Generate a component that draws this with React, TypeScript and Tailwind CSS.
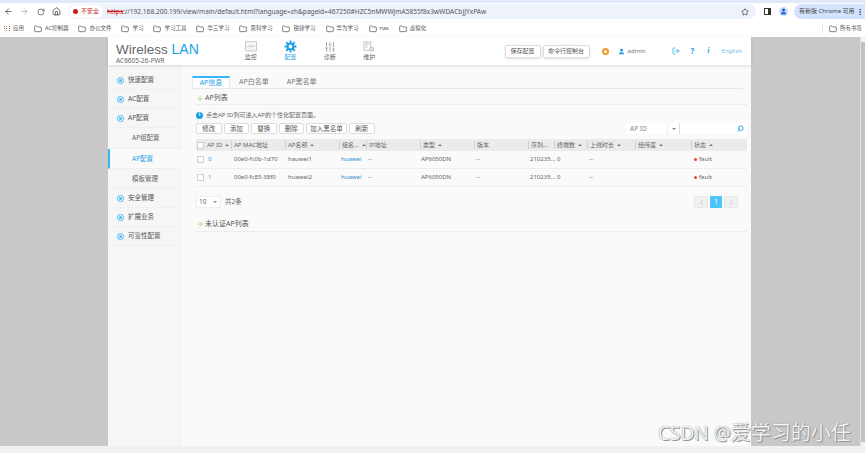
import { ArrowDown, ArrowLeft, ArrowRight, ChevronLeft, ChevronRight, Folder, House, LogOut, MoreVertical, RotateCw, Search, SlidersVertical, Star, User } from 'lucide-react';

const cjk = { fontFamily: '"Noto Sans", "Noto Sans CJK SC", sans-serif' };

const bookmarks = ['AC控制器', '办公文件', '学习', '学习工具', '华三学习', '思科学习', '锐捷学习', '华为学习', 'nas', '虚拟化'];
const sideMenu = [
  { label: '快速配置', h: 'h-[19px]' },
  { label: 'AC配置', h: 'h-[19px]' },
  { label: 'AP配置', h: 'h-[19px]' },
  { label: 'AP组配置', h: 'h-[21px]', sub: true },
  { label: 'AP配置', h: 'h-[20px]', sub: true, active: true },
  { label: '模板管理', h: 'h-[20px]', sub: true },
  { label: '安全管理', h: 'h-[19px]' },
  { label: '扩展业务', h: 'h-[19px]' },
  { label: '可靠性配置', h: 'h-[19px]' },
];
const actions = ['修改', '添加', '替换', '删除', '加入黑名单', '刷新'];
const columns = [
  { label: 'AP ID', sort: true },
  { label: 'AP MAC地址' },
  { label: 'AP名称', sort: true },
  { label: '组名...', sort: true },
  { label: 'IP地址' },
  { label: '类型', sort: true },
  { label: '版本' },
  { label: '序列...' },
  { label: '终端数', sort: true },
  { label: '上线时长', sort: true },
  { label: '经纬度', sort: true },
  { label: '状态', sort: true },
];
const rows = [
  { id: '0', mac: '00e0-fc0b-1d70', name: 'hauwei1' },
  { id: '1', mac: '00e0-fc85-38f0', name: 'huawei2' },
];
const tableCols = 'grid grid-cols-[35px_54px_54px_27px_54px_54px_54px_26px_33px_48px_56px_56px]';

function CircleMark() {
  return (
    <span className="flex w-[7px] h-[7px] items-center justify-center rounded-full border border-[#4db8f0]">
      <span className="w-[3px] h-[3px] rounded-full bg-[#4db8f0]" />
    </span>
  );
}

function GearIcon() {
  return (
    <svg width="13" height="13" viewBox="0 0 24 24" fill="none" stroke="#1a9fe8" strokeWidth="4" strokeLinejoin="round">
      <circle cx="12" cy="12" r="5.5" />
      <path strokeWidth="3.5" d="M12 1v4M12 19v4M1 12h4M19 12h4M4.2 4.2l2.9 2.9M16.9 16.9l2.9 2.9M4.2 19.8l2.9-2.9M16.9 7.1l2.9-2.9" />
    </svg>
  );
}

function MonitorIcon() {
  return (
    <svg width="12" height="11" viewBox="0 0 26 24" fill="none" stroke="#a5a5a5" strokeWidth="1.2">
      <rect x="1" y="1" width="24" height="21" rx="1" fill="#f4f4f4" />
      <path d="M5 12h5l2-3 3 4 2-2h5" />
    </svg>
  );
}

function MaintainIcon() {
  return (
    <svg width="12" height="12" viewBox="0 0 26 26" fill="none" stroke="#a5a5a5" strokeWidth="1.4">
      <rect x="2" y="2" width="15" height="18" />
      <path d="M5 6h9M5 10h5M5 14h4" />
      <circle cx="19" cy="18" r="4.5" fill="#fff" />
      <circle cx="19" cy="18" r="1.5" />
    </svg>
  );
}

function SortMark() {
  return <span className="ml-[3px] border-x-[2px] border-b-[2px] border-x-transparent border-b-[#777]" />;
}

function CheckBox() {
  return <span className="block w-[7px] h-[7px] border border-[#cfcfcf] bg-white" />;
}

function BrowserBar() {
  return (
    <div className="shrink-0 bg-white">
      <div className="h-[3px] bg-[#dfe9f8]" />
      <div className="flex items-center h-[17px] pl-[4px]">
        <ArrowLeft size={9} className="text-[#444]" />
        <ArrowRight size={9} className="ml-[7px] text-[#aaa]" />
        <RotateCw size={8} className="ml-[8px] text-[#444]" />
        <House size={9} className="ml-[7px] text-[#444]" />
        <div className="ml-[7px] flex items-center h-[15px] w-[688px] rounded-full bg-[#edf2fb]">
          <div className="flex items-center h-[13px] ml-[1px] px-[4px] gap-[3px] rounded-full bg-white">
            <span className="flex w-[5px] h-[5px] rounded-full bg-[#c5221f]" />
            <span className="text-[6px] text-[#c5221f]">不安全</span>
          </div>
          <span className="ml-[4px] text-[6.6px] text-[#555] whitespace-nowrap">
            <span className="text-[#c5221f] line-through">https</span>://192.168.200.199/view/main/default.html?language=zh&amp;pageid=467250#HZC5nMWWjmA5855f8x3wWDACbJJYxPAw
          </span>
          <Star size={8} className="ml-auto mr-[7px] text-[#333]" />
        </div>
        <span className="ml-[8px] w-[7px] h-[7px] border border-[#333] border-r-[3px]" />
        <span className="ml-[8px] flex items-center justify-center w-[9px] h-[9px] rounded-full bg-[#c9dcf8]">
          <User size={7} fill="#1a56c4" className="text-[#1a56c4]" />
        </span>
        <div className="ml-[6px] flex items-center h-[15px] flex-1 pl-[5px] rounded-l-full bg-[#d3e3fd]">
          <span className="text-[6px] text-[#444] whitespace-nowrap">有新版 Chrome 可用</span>
          <MoreVertical size={8} className="ml-auto mr-[1px] text-[#333]" />
        </div>
      </div>
      <div className="flex items-center h-[17px] pl-[4px] text-[5.5px] text-[#555]">
        <span className="grid grid-cols-3 gap-[1px] w-[6px] mr-[3px]">
          {['#ea4335', '#fbbc04', '#34a853', '#4285f4', '#ea4335', '#34a853', '#fbbc04', '#4285f4', '#ea4335'].map((c, i) => (
            <span key={i} className="w-[1px] h-[1px]" style={{ backgroundColor: c }} />
          ))}
        </span>
        <span className="mr-[10px]">应用</span>
        {bookmarks.map((b) => (
          <span key={b} className="flex items-center gap-[3px] mr-[10px]">
            <Folder size={8} className="text-[#444]" />
            {b}
          </span>
        ))}
        <div className="ml-auto flex items-center gap-[3px] pl-[6px] mr-[3px] border-l border-[#dfe9f8]">
          <Folder size={8} className="text-[#444]" />
          所有书签
        </div>
      </div>
    </div>
  );
}

function TopNav() {
  return (
    <div className="flex items-center h-[28px] shrink-0 bg-white shadow-[0_1px_3px_rgba(0,0,0,0.12)] relative">
      <div className="w-[123px] pl-[8px] pt-[4px]">
        <div className="text-[13.5px] leading-[15px] text-[#666] whitespace-nowrap" style={{ fontFamily: '"Liberation Sans", sans-serif' }}>
          Wireless <span className="text-[14px] text-[#1a9fe8]">LAN</span>
        </div>
        <div className="text-[6.5px] leading-[8px] text-[#666]">AC6605-26-PWR</div>
      </div>
      <div className="flex items-start h-full pt-[3px]">
        {[
          { label: '监控', icon: <MonitorIcon /> },
          { label: '配置', icon: <GearIcon />, active: true },
          { label: '诊断', icon: <SlidersVertical size={12} className="text-[#aaa]" /> },
          { label: '维护', icon: <MaintainIcon /> },
        ].map((n) => (
          <div key={n.label} className={`flex flex-col items-center w-[39.5px] ${n.active ? 'text-[#1a9fe8]' : 'text-[#666]'}`}>
            <span className="flex items-center h-[13px]">{n.icon}</span>
            <span className="text-[6px] leading-[8px]">{n.label}</span>
          </div>
        ))}
      </div>
      <div className="ml-auto flex items-center pr-[9px] text-[6px]">
        <span className="flex items-center justify-center w-[36px] h-[13px] rounded-[2px] border border-[#ddd] text-[#555] shadow-sm">保存配置</span>
        <span className="ml-[2px] flex items-center justify-center w-[47px] h-[13px] rounded-[2px] border border-[#ddd] text-[#555] shadow-sm">命令行控制台</span>
        <span className="ml-[12px] flex items-center justify-center w-[7px] h-[7px] rounded-full bg-[#f39a2b]">
          <span className="w-[3px] h-[3px] rounded-full bg-white" />
        </span>
        <User size={7} fill="#1a9fe8" className="ml-[9px] text-[#1a9fe8]" />
        <span className="ml-[3px] text-[#777]">admin</span>
        <LogOut size={8} className="ml-[26px] text-[#1a9fe8]" />
        <span className="ml-[11px] text-[8px] font-bold text-[#1a9fe8]">?</span>
        <span className="ml-[13px] text-[8px] font-bold italic text-[#1a9fe8]" style={{ fontFamily: '"Liberation Serif", serif' }}>i</span>
        <span className="ml-[12px] text-[#6fc0ef]">English</span>
      </div>
    </div>
  );
}

function Sidebar() {
  return (
    <div className="w-[74px] shrink-0 bg-[#f6f6f6] pt-[6px] text-[6.5px]">
      {sideMenu.map((m, i) => (
        <div
          key={i}
          className={`flex items-center ${m.h} border-b border-[#f0f0f0] ${m.active ? 'border-l-2 border-l-[#37b5f5] pl-[22px] text-[#1a9fe8] bg-[#fafafa]' : m.sub ? 'pl-[24px] text-[#666]' : 'pl-[9px] text-[#555]'}`}
        >
          {!m.sub && <CircleMark />}
          <span className={m.sub ? '' : 'ml-[4px]'}>{m.label}</span>
        </div>
      ))}
    </div>
  );
}

function ApTable() {
  return (
    <div className="w-[551px] text-[6px] text-[#666]">
      <div className={`${tableCols} h-[12px] items-center bg-[#ebebeb]`}>
        {columns.map((c, i) => (
          <div key={c.label} className={`flex items-center h-[8px] ${i === 0 ? 'pl-[1px]' : 'pl-[2px] border-l border-[#cfcfcf]'}`}>
            {i === 0 && <span className="mr-[3px]"><CheckBox /></span>}
            <span className="whitespace-nowrap">{c.label}</span>
            {c.sort && <SortMark />}
          </div>
        ))}
      </div>
      {rows.map((r) => (
        <div key={r.id} className={`${tableCols} h-[18px] pb-[1px] items-center border-b border-[#eeeeee]`}>
          <div className="flex items-center pl-[1px]">
            <CheckBox />
            <span className="ml-[4px] text-[#1a9fe8]">{r.id}</span>
          </div>
          <div className="pl-[3px]">{r.mac}</div>
          <div className="pl-[3px]">{r.name}</div>
          <div className="pl-[2px] text-[#2a8fd0]">huawei</div>
          <div className="pl-[2px]">--</div>
          <div className="pl-[1px]">AP6050DN</div>
          <div className="pl-[2px]">--</div>
          <div className="pl-[2px] whitespace-nowrap">210235...</div>
          <div className="pl-[3px]">0</div>
          <div className="pl-[2px]">--</div>
          <div />
          <div className="flex items-center pl-[3px]">
            <span className="w-[3px] h-[3px] mr-[2px] rounded-full bg-[#f04030]" />
            fault
          </div>
        </div>
      ))}
    </div>
  );
}

function Content() {
  return (
    <div className="flex-1 bg-[#fafafa] pl-[10px] pr-[4px] pt-[11px] text-[#666]">
      <div className="flex h-[13px] w-[551px] border-b border-[#e8e8e8] text-[7px]">
        <span className="flex items-center justify-center w-[38px] border-t-2 border-x border-t-[#37b5f5] border-x-[#e8e8e8] bg-white text-[#1a9fe8]">AP信息</span>
        <span className="flex items-center ml-[9px] text-[#777]">AP白名单</span>
        <span className="flex items-center ml-[18px] text-[#777]">AP黑名单</span>
      </div>
      <div className="flex items-center gap-[1px] h-[16px] pt-[3px] w-[551px] ml-[4px] border-b border-[#ececec] text-[7px] text-[#555]">
        <ArrowDown size={8} className="text-[#8ccf6a]" />
        <span>AP列表</span>
      </div>
      <div className="ml-[4px] w-[551px]">
        <div className="flex items-center h-[18px] pt-[2px] text-[6px]">
          <span className="flex items-center justify-center w-[7px] h-[7px] rounded-full bg-[#1a9fe8] text-[5px] font-bold text-white">i</span>
          <span className="ml-[3px]">点击AP ID列可进入AP的个性化配置页面。</span>
        </div>
        <div className="flex items-center justify-between h-[11px]">
          <div className="flex gap-[2px] text-[6.5px]">
            {actions.map((a) => (
              <span key={a} className={`flex items-center justify-center h-[11px] rounded-[2px] border border-[#ddd] bg-white text-[#555] ${a.length > 2 ? 'w-[41px]' : 'w-[25.5px]'}`}>{a}</span>
            ))}
          </div>
          <div className="flex items-center h-[11px] bg-white text-[6.5px] text-[#888] rounded-[2px]">
            <span className="flex items-center w-[42px] pl-[4px] border-r border-[#eee] h-full">AP ID</span>
            <span className="flex items-center justify-center w-[12px] h-full border-r border-[#ddd]">
              <span className="border-x-[2px] border-t-[2px] border-x-transparent border-t-[#888]" />
            </span>
            <span className="flex items-center justify-end w-[67px] pr-[3px]">
              <Search size={7} strokeWidth={3} className="-scale-x-100 text-[#1a9fe8]" />
            </span>
          </div>
        </div>
        <div className="mt-[5px]">
          <ApTable />
        </div>
        <div className="flex items-center justify-between h-[12px] mt-[9px] text-[6.5px]">
          <div className="flex items-center">
            <span className="flex items-center w-[25px] h-[12px] pl-[2px] bg-white border border-[#eee]">
              10
              <span className="ml-auto mr-[3px] border-x-[2px] border-t-[2px] border-x-transparent border-t-[#888]" />
            </span>
            <span className="ml-[4px]">共2条</span>
          </div>
          <div className="flex gap-[2px] mr-[9px] items-center">
            <span className="flex items-center justify-center w-[14px] h-[12px] bg-[#f1f1f1] border border-[#e8e8e8] text-[#bbb]"><ChevronLeft size={9} /></span>
            <span className="flex items-center justify-center w-[12px] h-[12px] bg-[#4dc4fa] text-white">1</span>
            <span className="flex items-center justify-center w-[14px] h-[12px] bg-[#f1f1f1] border border-[#e8e8e8] text-[#bbb]"><ChevronRight size={9} /></span>
          </div>
        </div>
        <div className="flex items-center gap-[1px] h-[15px] mt-[9px] border-b border-[#ececec] text-[7px] text-[#555]">
          <ArrowRight size={8} className="text-[#8ccf6a]" />
          <span>未认证AP列表</span>
        </div>
      </div>
    </div>
  );
}

export default function App() {
  return (
    <div className="relative flex flex-col w-[865px] h-[453px] overflow-hidden bg-[#c8c8c8]" style={cjk}>
      <BrowserBar />
      <div className="flex flex-1 min-h-0">
        <div className="w-[108px] shrink-0" />
        <div className="flex flex-col w-[643px] shrink-0 bg-[#fafafa]">
          <TopNav />
          <div className="flex flex-1 min-h-0">
            <Sidebar />
            <Content />
          </div>
        </div>
        <div className="flex-1" />
        <div className="w-[5px] shrink-0 bg-[#f1f1f1] border-l border-[#e0e0e0]">
          <div className="h-[5px]" />
          <div className="h-[400px] bg-[#c1c1c1]" />
        </div>
      </div>
      <div className="h-[7px] shrink-0 bg-[#f1f1f1]" />
      <div className="absolute left-[658px] top-[422px] text-[19px] leading-[22px] text-[#f4f4f4] whitespace-nowrap [text-shadow:0_0_1px_#777,1px_1px_0_#999]">
        CSDN @<span className="text-[20px]">爱学习的小任</span>
      </div>
    </div>
  );
}
